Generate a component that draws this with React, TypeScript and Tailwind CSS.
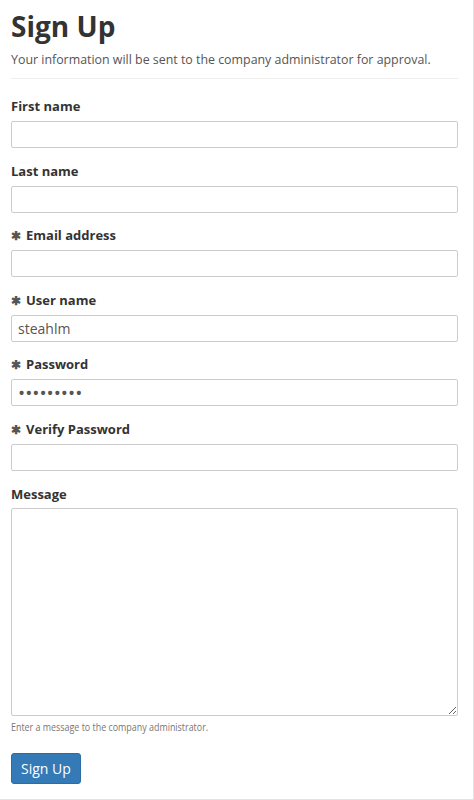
import { useState } from "react"

interface FieldProps {
    label: string
    required?: boolean
    type?: string
    value?: string
}

function Field({ label, required, type = "text", value }: FieldProps) {
    const [text, setText] = useState<string>(value || "")
    return (
        <div className="mb-[13.6px]">
            <label className="block h-[18px] text-[13px] leading-[18px] font-bold text-[#333] mb-[6px]">
                {required && <span className="mr-[5px] text-[12px] text-[#555]">✱</span>}
                {label}
            </label>
            <input
                type={type}
                value={text}
                onChange={e => setText(e.target.value)}
                className={`block w-full h-[27px] rounded-[2px] border border-[#ccc] bg-white px-[6px] text-[#555] outline-none ${type === "password" ? "text-[19px] text-[#444]" : "text-[14px]"}`}
            />
        </div>
    )
}

export default function App() {
    return (
        <div className="w-[474px] h-[800px] bg-white border-r border-b border-[#e3e3e3] font-['Open_Sans',sans-serif] text-[#333]">
            <div className="px-[11px] pr-[15px] pt-[7px]">
                <h1 className="text-[28px] leading-[38px] font-bold text-[#333]">Sign Up</h1>
                <p className="mt-[6px] text-[12.4px] leading-[18px] text-[#555]">
                    Your information will be sent to the company administrator for approval.
                </p>
                <div className="mt-[9px] mb-[18px] h-px bg-[#eee]" />

                <Field label="First name" />
                <Field label="Last name" />
                <Field label="Email address" required />
                <Field label="User name" required value="steahlm" />
                <Field label="Password" required type="password" value="abcdefghi" />
                <Field label="Verify Password" required type="password" />

                <div>
                    <label className="block h-[18px] text-[13px] leading-[18px] font-bold text-[#333] mb-[5px]">
                        Message
                    </label>
                    <textarea className="block w-full h-[208px] rounded-[2px] border border-[#ccc] bg-white px-[6px] py-[4px] text-[14px] text-[#555] outline-none" />
                    <p className="mt-[3px] h-[16px] text-[11px] leading-[16px] text-[#777]">
                        <span className="inline-block origin-left scale-x-[0.81] whitespace-nowrap">
                            Enter a message to the company administrator.
                        </span>
                    </p>
                </div>

                <button
                    type="button"
                    className="mt-[18px] h-[31px] px-[9px] rounded-[3px] bg-[#337ab7] border border-[#2e6da4] text-[14px] text-white"
                >
                    Sign Up
                </button>
            </div>
        </div>
    )
}
